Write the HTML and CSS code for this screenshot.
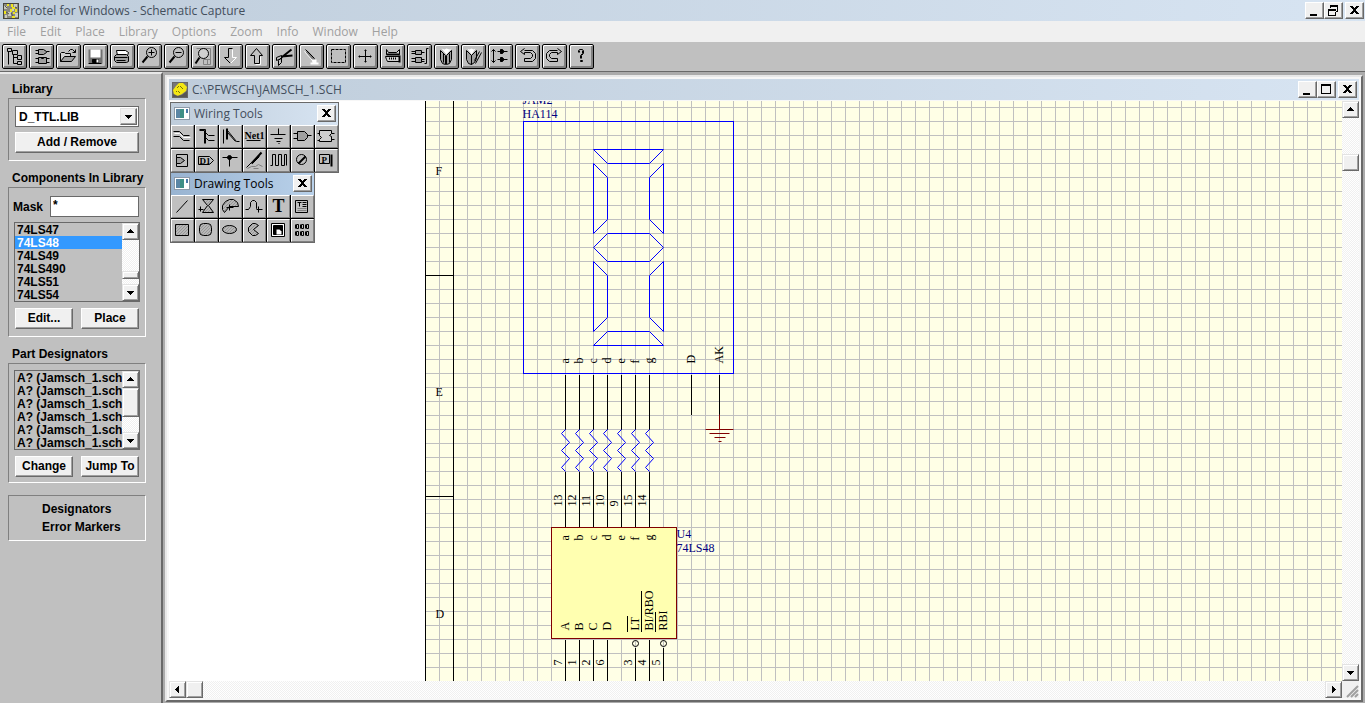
FILE: index.html
```html
<!DOCTYPE html>
<html lang="en">
<head>
  <meta charset="UTF-8" />
  <meta name="viewport" content="width=device-width, initial-scale=1.0"/>
  <title>Protel for Windows - Schematic Capture</title>
  <link rel="stylesheet" href="styles.css">
</head>
<body>
  <!-- shared fills and symbols -->
  <svg class="defs" width="0" height="0" aria-hidden="true">
    <defs>
      <pattern id="hatch" width="3" height="3" patternUnits="userSpaceOnUse">
        <rect width="3" height="3" fill="#d8d8d8"/>
        <path d="M-1 1L1 -1M0 3L3 0M2 4L4 2" stroke="#555" stroke-width="1"/>
      </pattern>
      <symbol id="i-close" viewBox="0 0 14 13">
        <path d="M3 2h3v1h1v1h1v-1h1v-1h3v1h-1v1h-1v1h-1v2h1v1h1v1h1v1h-3v-1h-1v-1h-1v1h-1v1h-3v-1h1v-1h1v-1h1v-2h-1v-1h-1v-1h-1z"/>
      </symbol>
      <symbol id="i-min" viewBox="0 0 14 13"><path d="M3 10h7v2h-7z"/></symbol>
      <symbol id="i-max" viewBox="0 0 14 13"><path fill-rule="evenodd" d="M2 1h10v10h-10zM3 3v7h8v-7z"/></symbol>
      <symbol id="i-restore" viewBox="0 0 14 13">
        <path fill-rule="evenodd" d="M4 1h8v7h-3v-1h2v-4h-6v1h-1zM2 5h8v7h-8zM3 7v4h6v-4z"/>
      </symbol>
      <symbol id="i-app" viewBox="0 0 16 16">
        <rect width="16" height="16" fill="#8b8b82"/>
        <path d="M1 3h3v3h-3zM5 9h3v4h-3zM11 1h3v3h-3zM12 10h3v4h-3zM2 12h2v3h-2zM9 6h2v2h-2z" fill="#c9cbc0"/>
        <path d="M4 1h2v2h-2zM8 1h2v3h2v2h-3v-2h-1zM12 6h2v3h-2zM7 6h2v3h-2zM1 8h2v3h-2zM9 13h3v2h-3zM10 9h2v2h-2z" fill="#efe51f"/>
        <path d="M2 3l2 2M3 9l3 2M8 10l2 3M12 4l2 1" fill="none" stroke="#55554c"/>
        <rect x=".5" y=".5" width="15" height="15" fill="none" stroke="#45453c"/>
      </symbol>
      <symbol id="i-doc" viewBox="0 0 16 16">
        <rect width="16" height="16" fill="#777"/>
        <path d="M1 8l3-4 3-3h4l4 4-1 4-4 3-4 2-4-2z" fill="#f3e713"/>
        <path d="M1 12l4 2 5-1 5-4v6h-14z" fill="#555"/>
        <path d="M8 4l3 3M5 6l2-2M6 9l2 2M4 9l1 1" stroke="#77720a" fill="none"/>
        <rect x=".5" y=".5" width="15" height="15" fill="none" stroke="#666"/>
      </symbol>
      <symbol id="i-form" viewBox="0 0 16 13">
        <rect x=".5" y=".5" width="15" height="12" fill="#fff" stroke="#8d9aa8"/>
        <rect x="2" y="2" width="8" height="9" fill="#3f8f86"/>
        <path d="M2 2h4v9h-4z" fill="#5b86a5"/>
        <rect x="12" y="2" width="2" height="4" fill="#4a79a8"/>
      </symbol>
      <symbol id="i-up" viewBox="0 0 13 13"><path d="M6 4h1v1h1v1h1v1h1v1h-7v-1h1v-1h1v-1h1z"/></symbol>
      <symbol id="i-down" viewBox="0 0 13 13"><path d="M3 5h7v1h-1v1h-1v1h-1v1h-1v-1h-1v-1h-1v-1h-1z"/></symbol>
      <symbol id="i-left" viewBox="0 0 13 13"><path d="M8 3v7h-1v-1h-1v-1h-1v-1h-1v-1h1v-1h1v-1h1v-1z"/></symbol>
      <symbol id="i-right" viewBox="0 0 13 13"><path d="M5 3v7h1v-1h1v-1h1v-1h1v-1h-1v-1h-1v-1h-1v-1z"/></symbol>
      <symbol id="resistor" overflow="visible"><path d="M0 0L-4 4L4 13L-4 21L4 29L-4 38L0 42"/></symbol>
    </defs>
  </svg>

  <header class="titlebar">
    <svg class="app-icon"><use href="#i-app"/></svg>
    <h1>Protel for Windows - Schematic Capture</h1>
    <div class="winbtns">
      <button class="winbtn" aria-label="Minimize"><svg><use href="#i-min"/></svg></button>
      <button class="winbtn" aria-label="Restore"><svg><use href="#i-restore"/></svg></button>
      <button class="winbtn close" aria-label="Close"><svg><use href="#i-close"/></svg></button>
    </div>
  </header>

  <nav class="menubar">
    <button>File</button>
    <button>Edit</button>
    <button>Place</button>
    <button>Library</button>
    <button>Options</button>
    <button>Zoom</button>
    <button>Info</button>
    <button>Window</button>
    <button>Help</button>
  </nav>

  <div class="toolbar">
    <button aria-label="Project tree"><svg class="ico" viewBox="-.5 -.5 21 21"><path d="M3 2h4v3h-4zM4 5v13M8 4h5v4h-5zM9 8v9h4M9 11h4M13 9h4v4h-4zM13 15h4v3h-4z"/></svg></button>
    <button aria-label="Parts"><svg class="ico" viewBox="-.5 -.5 21 21"><path class="g" d="M7 3h5l3 2v1l-3 2h-5zM7 11h8v6h-8z"/><path d="M4 4h3M4 7h3M15 5h3M4 12h3M4 16h3M15 12h3M15 16h3M10 11v1h2v-1"/></svg></button>
    <button aria-label="Open"><svg class="ico" viewBox="-.5 -.5 21 21"><path class="gf" d="M2 15V7l1-1h3l1 1h5v3"/><path class="g" d="M2 15l4-5h11l-4 5z"/><path d="M10 5l2-2h2l3 3M17 3v3h-3"/></svg></button>
    <button aria-label="Save"><svg class="ico" viewBox="-.5 -.5 21 21"><path class="d" d="M3 3h14v14h-13l-1-1z"/><path class="wf" d="M5 3h10v8h-10z"/><path class="k" d="M7 13h6v3h-6z"/><path class="wf" d="M11 13h2v3h-2z"/><path d="M3 17h13"/></svg></button>
    <button aria-label="Print"><svg class="ico" viewBox="-.5 -.5 21 21"><path class="w" d="M4 4h9l3 2-1 3h-10z"/><path class="g" d="M2 10l2-2h10l2 2v5l-2 1h-10l-2-2z"/><path d="M2 11h13M4 14h9"/></svg></button>
    <button aria-label="Zoom in"><svg class="ico" viewBox="-.5 -.5 21 21"><circle cx="12" cy="6" r="5"/><path d="M12 3v6M9 6h6"/><path class="t" d="M8 10L3 16"/></svg></button>
    <button aria-label="Zoom out"><svg class="ico" viewBox="-.5 -.5 21 21"><circle cx="12" cy="6" r="5"/><path d="M9 6h6"/><path class="t" d="M8 10L3 16"/></svg></button>
    <button aria-label="Zoom area"><svg class="ico" viewBox="-.5 -.5 21 21"><path class="gl" d="M3 2h14v16h-7v-5h7M14 13v5"/><circle class="gf" cx="10" cy="7" r="5"/><path class="t" d="M6 11L2 17"/></svg></button>
    <button aria-label="Down the hierarchy"><svg class="ico" viewBox="-.5 -.5 21 21"><path d="M12 2h-4v9h-4l6 6"/><path class="wl" d="M12 3v8h4l-6 6"/></svg></button>
    <button aria-label="Up the hierarchy"><svg class="ico" viewBox="-.5 -.5 21 21"><path class="wl" d="M13 10v8h-5"/><path d="M7 17h5V9h3l-6-7-6 7h4z"/></svg></button>
    <button aria-label="Cut"><svg class="ico" viewBox="-.5 -.5 21 21"><path class="t" d="M7 11L17 3M7 10L18 9"/><path d="M2 11l5-2v3l-5 2zM7 11v5l-3 3v-5z"/></svg></button>
    <button aria-label="Paste"><svg class="ico" viewBox="-.5 -.5 21 21"><path class="gt" d="M5 5l8 9"/><path class="wl" d="M3 5l8 9"/><path class="wf" d="M10 13h5v3h2v2h-8v-2h2z"/><path d="M4 3l9 9"/></svg></button>
    <button aria-label="Select inside"><svg class="ico" viewBox="-.5 -.5 21 21"><path stroke-dasharray="3 1" d="M3 3h14v13h-14z"/></svg></button>
    <button aria-label="Move"><svg class="ico" viewBox="-.5 -.5 21 21"><path d="M10 3v13M3 10h13M9 4h2M9 15h2M4 9v2M15 9v2"/></svg></button>
    <button aria-label="Drag"><svg class="ico" viewBox="-.5 -.5 21 21"><path class="gf" d="M4 3l2 3h8l3-3v5h-13z"/><path class="t" d="M4 8h13"/><path class="gf" d="M3 10h14v5h-12l-1-2z"/><path class="t" d="M17 9v7"/><path d="M7 11v2M9 11v2M11 11v2M13 11v2"/></svg></button>
    <button aria-label="Align"><svg class="ico" viewBox="-.5 -.5 21 21"><path class="g" d="M6 4h6v4h-6zM6 11h6v5h-6z"/><path d="M2 5h4M2 7h4M12 6h3M2 12h4M2 15h4M12 13h3M12 15h3M19 2h-2v15h-2"/></svg></button>
    <button aria-label="Library browser"><svg class="ico" viewBox="-.5 -.5 21 21"><path class="g" d="M4 4l5 5v9l-3-1-2-4zM15 4l-5 5v9l3-1 2-4z"/><path class="wf" d="M5 2l5 6 5-6-2 1-3-1-2 1z"/><path d="M7 7v9M13 7v9"/></svg></button>
    <button aria-label="Library editor"><svg class="ico" viewBox="-.5 -.5 21 21"><path class="g" d="M3 4l5 5v9l-3-1-2-4zM13 4l-5 5v9l3-2 2-4z"/><path class="wf" d="M4 2l4 6 4-6-2 1-2-1-2 1z"/><path d="M18 6L12 17M16 5L11 14"/></svg></button>
    <button aria-label="Annotate"><svg class="ico" viewBox="-.5 -.5 21 21"><path d="M3 3v13M1 5l2-2 2 2M1 14l2 2 2-2M7 5h10M7 13h10"/><path class="k" d="M10 3h2l1 1v2l-1 1h-2zM10 11h2l1 1v2l-1 1h-2z"/></svg></button>
    <button aria-label="Undo"><svg class="ico" viewBox="-.5 -.5 21 21"><path d="M7 2L3 5l4 3v-2h6l2 2v2l-2 2h-6M7 4h8l3 3v5l-3 3h-8v-3"/></svg></button>
    <button aria-label="Redo"><svg class="ico" viewBox="-.5 -.5 21 21"><path d="M13 2l4 3-4 3v-2h-6l-2 2v2l2 2h6M13 4h-8l-3 3v5l3 3h8v-3"/></svg></button>
    <button aria-label="Help"><svg class="ico" viewBox="-.5 -.5 21 21"><path d="M7 6V4l1-1h3l1 1v3l-2 2v3M8 6V4M11 4v3l-2 2v3M9 14h2v1h-2z"/></svg></button>
  </div>

  <div class="workspace">
    <aside class="sidebar">
      <section>
        <label class="heading" for="library">Library</label>
        <div class="group">
          <div class="combo">
            <select id="library"><option>D_TTL.LIB</option></select>
            <span class="drop"><svg><use href="#i-down"/></svg></span>
          </div>
          <button class="btn">Add / Remove</button>
        </div>
      </section>

      <section>
        <h2 class="heading">Components In Library</h2>
        <div class="group">
          <div class="mask">
            <label for="mask">Mask</label>
            <input type="text" id="mask" value="*">
          </div>
          <div class="listbox">
            <ul>
              <li>74LS47</li>
              <li class="selected">74LS48</li>
              <li>74LS49</li>
              <li>74LS490</li>
              <li>74LS51</li>
              <li>74LS54</li>
            </ul>
            <div class="scroll">
              <button class="sb" aria-label="Up"><svg><use href="#i-up"/></svg></button>
              <span class="before"></span>
              <span class="thumb small"></span>
              <span class="rest"></span>
              <button class="sb" aria-label="Down"><svg><use href="#i-down"/></svg></button>
            </div>
          </div>
          <div class="pair">
            <button class="btn">Edit...</button>
            <button class="btn">Place</button>
          </div>
        </div>
      </section>

      <section>
        <h2 class="heading">Part Designators</h2>
        <div class="group parts">
          <div class="listbox">
            <ul>
              <li>A? (Jamsch_1.sch)</li>
              <li>A? (Jamsch_1.sch)</li>
              <li>A? (Jamsch_1.sch)</li>
              <li>A? (Jamsch_1.sch)</li>
              <li>A? (Jamsch_1.sch)</li>
              <li>A? (Jamsch_1.sch)</li>
            </ul>
            <div class="scroll">
              <button class="sb" aria-label="Up"><svg><use href="#i-up"/></svg></button>
              <span class="thumb large"></span>
              <span class="rest"></span>
              <button class="sb" aria-label="Down"><svg><use href="#i-down"/></svg></button>
            </div>
          </div>
          <div class="pair">
            <button class="btn">Change</button>
            <button class="btn">Jump To</button>
          </div>
        </div>
      </section>

      <div class="group modes">
        <p>Designators</p>
        <p>Error Markers</p>
      </div>
    </aside>

    <main class="mdi">
      <div class="child">
        <div class="titlebar">
          <svg class="app-icon"><use href="#i-doc"/></svg>
          <h2>C:\PFWSCH\JAMSCH_1.SCH</h2>
          <div class="winbtns">
            <button class="winbtn" aria-label="Minimize"><svg><use href="#i-min"/></svg></button>
            <button class="winbtn" aria-label="Maximize"><svg><use href="#i-max"/></svg></button>
            <button class="winbtn close" aria-label="Close"><svg><use href="#i-close"/></svg></button>
          </div>
        </div>

        <div class="view">
          <div class="canvas">
            <svg class="sheet">
              <defs>
                <pattern id="grid" width="14" height="14" y="6" patternUnits="userSpaceOnUse">
                  <rect width="14" height="14" fill="#ffffe6"/>
                  <path d="M0 0h14v1h-13v13h-1z" fill="#c0c0c0"/>
                </pattern>
              </defs>
              <rect width="100%" height="100%" fill="url(#grid)"/>
              <g transform="translate(.5 .5)">
                <!-- sheet border and zones -->
                <path class="line" d="M0 -1V2000M28 -1V2000M0 174H28M0 395H28"/>
                <text class="zone" x="10" y="73">F</text>
                <text class="zone" x="10" y="294">E</text>
                <text class="zone" x="10" y="516">D</text>

                <!-- JAM2: seven segment display -->
                <text class="name" x="97" y="2">JAM2</text>
                <text class="name" x="97" y="16">HA114</text>
                <g class="blue">
                  <rect x="98" y="20" width="210" height="252"/>
                  <path d="M168 48H238L224 62H182Z"/>
                  <path d="M168 62L182 76V118L168 132Z"/>
                  <path d="M238 62L224 76V118L238 132Z"/>
                  <path d="M168 146L182 132H224L238 146L224 160H182Z"/>
                  <path d="M168 160L182 174V216L168 230Z"/>
                  <path d="M238 160L224 174V216L238 230Z"/>
                  <path d="M182 230H224L238 244H168Z"/>
                </g>
                <g class="pin">
                  <text transform="translate(143 262) rotate(-90)">a</text>
                  <text transform="translate(157 262) rotate(-90)">b</text>
                  <text transform="translate(171 262) rotate(-90)">c</text>
                  <text transform="translate(185 262) rotate(-90)">d</text>
                  <text transform="translate(199 262) rotate(-90)">e</text>
                  <text transform="translate(213 262) rotate(-90)">f</text>
                  <text transform="translate(227 262) rotate(-90)">g</text>
                  <text transform="translate(269 262) rotate(-90)">D</text>
                  <text transform="translate(297 262) rotate(-90)">AK</text>
                </g>
                <path class="line" d="M140 273V328M154 273V328M168 273V328M182 273V328M196 273V328M210 273V328M224 273V328M266 273V313M294 273V313"/>
                <path class="maroon" d="M294 313V328M280 328H308M284 332H304M289 336H300M293 340H296"/>

                <!-- series resistors -->
                <g class="blue">
                  <use href="#resistor" x="140" y="328"/>
                  <use href="#resistor" x="154" y="328"/>
                  <use href="#resistor" x="168" y="328"/>
                  <use href="#resistor" x="182" y="328"/>
                  <use href="#resistor" x="196" y="328"/>
                  <use href="#resistor" x="210" y="328"/>
                  <use href="#resistor" x="224" y="328"/>
                </g>
                <path class="line" d="M140 370V426M154 370V426M168 370V426M182 370V426M196 370V426M210 370V426M224 370V426"/>
                <g class="pin">
                  <text transform="translate(136 405) rotate(-90)">13</text>
                  <text transform="translate(150 405) rotate(-90)">12</text>
                  <text transform="translate(164 405) rotate(-90)">11</text>
                  <text transform="translate(178 405) rotate(-90)">10</text>
                  <text transform="translate(192 405) rotate(-90)">9</text>
                  <text transform="translate(206 405) rotate(-90)">15</text>
                  <text transform="translate(220 405) rotate(-90)">14</text>
                </g>

                <!-- U4: 74LS48 decoder -->
                <rect class="chip" x="126" y="426" width="125" height="111"/>
                <text class="name" x="251" y="436">U4</text>
                <text class="name" x="251" y="450">74LS48</text>
                <g class="pin">
                  <text transform="translate(143 439) rotate(-90)">a</text>
                  <text transform="translate(157 439) rotate(-90)">b</text>
                  <text transform="translate(171 439) rotate(-90)">c</text>
                  <text transform="translate(185 439) rotate(-90)">d</text>
                  <text transform="translate(199 439) rotate(-90)">e</text>
                  <text transform="translate(213 439) rotate(-90)">f</text>
                  <text transform="translate(227 439) rotate(-90)">g</text>
                  <text transform="translate(143 529) rotate(-90)">A</text>
                  <text transform="translate(157 529) rotate(-90)">B</text>
                  <text transform="translate(171 529) rotate(-90)">C</text>
                  <text transform="translate(185 529) rotate(-90)">D</text>
                  <text transform="translate(213 529) rotate(-90)">LT</text>
                  <text transform="translate(227 529) rotate(-90)">BI/RBO</text>
                  <text transform="translate(241 529) rotate(-90)">RBI</text>
                  <text transform="translate(136 564) rotate(-90)">7</text>
                  <text transform="translate(150 564) rotate(-90)">1</text>
                  <text transform="translate(164 564) rotate(-90)">2</text>
                  <text transform="translate(178 564) rotate(-90)">6</text>
                  <text transform="translate(206 564) rotate(-90)">3</text>
                  <text transform="translate(220 564) rotate(-90)">4</text>
                  <text transform="translate(234 564) rotate(-90)">5</text>
                </g>
                <path class="line" d="M202 530V514M216 530V489M230 530V510"/>
                <path class="line" d="M140 538V2000M154 538V2000M168 538V2000M182 538V2000M210 546V2000M224 538V2000M238 546V2000"/>
                <circle class="bubble" cx="210" cy="542" r="3"/>
                <circle class="bubble" cx="238" cy="542" r="3"/>
              </g>
            </svg>

            <div class="palettes">
              <div class="palette">
                <div class="palette-title">
                  <svg class="form-icon"><use href="#i-form"/></svg>
                  <h3>Wiring Tools</h3>
                  <button class="winbtn" aria-label="Close"><svg><use href="#i-close"/></svg></button>
                </div>
                <div class="tools seven">
                  <button aria-label="Wire"><svg class="ico" viewBox="-.5 -.5 21 21"><path class="wl" d="M2 7h5l4 4h7"/><path d="M1 5h6l4 4h6M1 10h6l4 4h6"/></svg></button>
                  <button aria-label="Bus"><svg class="ico" viewBox="-.5 -.5 21 21"><path d="M3 3h6v14M3 4h5v13M9 6l3 3h6M9 11l3 3h6"/></svg></button>
                  <button aria-label="Bus entry"><svg class="ico" viewBox="-.5 -.5 21 21"><path d="M3 3v14M6 2v11M7 2v11M7 4l9 11h3M7 6l8 9"/></svg></button>
                  <button aria-label="Net label"><svg class="ico" viewBox="-.5 -.5 21 21"><text x="0" y="12">Net1</text><path d="M2 14h14"/></svg></button>
                  <button aria-label="Power port"><svg class="ico" viewBox="-.5 -.5 21 21"><path d="M10 2v6M2 8h15M6 12h8M8 15h4M10 17h1"/></svg></button>
                  <button aria-label="Part"><svg class="ico" viewBox="-.5 -.5 21 21"><path class="g" d="M5 5h7l3 3v3l-3 3h-7z"/><path d="M1 7h4M1 12h4M15 9h4"/></svg></button>
                  <button aria-label="Sheet symbol"><svg class="ico" viewBox="-.5 -.5 21 21"><path class="gf" d="M3 4h12v3l-2 2 2 1v5h-12v-2l2-2-2-2z"/><path d="M1 7h2M1 14h2M15 7h3M15 13h3"/></svg></button>
                  <button aria-label="Sheet entry"><svg class="ico" viewBox="-.5 -.5 21 21"><path d="M4 4h11v12h-11z"/><path class="g" d="M4 7h4l4 3-4 3h-4z"/></svg></button>
                  <button aria-label="Port"><svg class="ico" viewBox="-.5 -.5 21 21"><path d="M2 6h11l4 4-4 4h-11z"/><text class="tiny" x="3" y="13">D1</text></svg></button>
                  <button aria-label="Junction"><svg class="ico" viewBox="-.5 -.5 21 21"><path d="M2 7h15M9 7v9"/><circle class="k" cx="9" cy="7" r="2"/></svg></button>
                  <button aria-label="Directive"><svg class="ico" viewBox="-.5 -.5 21 21"><path class="t" d="M17 2L7 13"/><path d="M7 12l-5 5M8 13l7-7"/><path class="gl" d="M3 18l4-2h4l3-2 4 2M9 18h5"/></svg></button>
                  <button aria-label="Stimulus"><svg class="ico" viewBox="-.5 -.5 21 21"><path d="M2 15h2V4h3v11h3V4h3v11h3V4h2v11"/></svg></button>
                  <button aria-label="No ERC"><svg class="ico" viewBox="-.5 -.5 21 21"><circle cx="9" cy="9" r="5"/><path class="t" d="M6 13l7-7"/></svg></button>
                  <button aria-label="PCB directive"><svg class="ico" viewBox="-.5 -.5 21 21"><path d="M3 4h10v9h-10z"/><path class="t" d="M15 4v12"/><text class="tiny" x="5" y="12">P</text></svg></button>
                </div>
              </div>

              <div class="palette active">
                <div class="palette-title">
                  <svg class="form-icon"><use href="#i-form"/></svg>
                  <h3>Drawing Tools</h3>
                  <button class="winbtn" aria-label="Close"><svg><use href="#i-close"/></svg></button>
                </div>
                <div class="tools six">
                  <button aria-label="Line"><svg class="ico" viewBox="-.5 -.5 21 21"><path d="M4 16L15 4"/></svg></button>
                  <button aria-label="Polygon"><svg class="ico" viewBox="-.5 -.5 21 21"><path class="h" d="M6 3h11l-5 6 5 7h-11l5-7z"/><path d="M4 10v5M2 13h5"/></svg></button>
                  <button aria-label="Arc"><svg class="ico" viewBox="-.5 -.5 21 21"><path class="h" d="M4 16L2 13V9L5 5L9 3H13L17 6L18 10H9Z"/><path d="M9 8v6M6 11h7"/></svg></button>
                  <button aria-label="Bezier"><svg class="ico" viewBox="-.5 -.5 21 21"><path d="M1 13h3l2-3V6l2-2h2l2 2v6l2 2M14 10v6M12 13h6"/></svg></button>
                  <button aria-label="Text"><svg class="ico" viewBox="-.5 -.5 21 21"><text class="big" x="4" y="15">T</text></svg></button>
                  <button aria-label="Text frame"><svg class="ico" viewBox="-.5 -.5 21 21"><path d="M3 4h12v12h-12zM5 6h4M7 6v4M10 6h4M10 8h4M10 10h4"/><path class="gl" d="M5 12h9M5 14h9"/></svg></button>
                  <button aria-label="Rectangle"><svg class="ico" viewBox="-.5 -.5 21 21"><path class="h" d="M3 4h13v11h-13z"/></svg></button>
                  <button aria-label="Rounded rectangle"><svg class="ico" viewBox="-.5 -.5 21 21"><rect class="h" x="3" y="3" width="12" height="12" rx="4"/></svg></button>
                  <button aria-label="Ellipse"><svg class="ico" viewBox="-.5 -.5 21 21"><ellipse class="h" cx="9" cy="9" rx="7" ry="4"/></svg></button>
                  <button aria-label="Pie"><svg class="ico" viewBox="-.5 -.5 21 21"><path class="h" d="M14 5l-3-2h-3l-4 4v4l4 4h3l3-2-5-4z"/></svg></button>
                  <button aria-label="Graphic"><svg class="ico" viewBox="-.5 -.5 21 21"><path class="w" d="M3 3h13v13h-13z"/><path class="k" d="M5 5h9v9h-9z"/><path class="wf" d="M8 9h3l2 2v3h-5z"/></svg></button>
                  <button aria-label="Array"><svg class="ico" viewBox="-.5 -.5 21 21"><path d="M4 4h2v4h-2zM9 4h2v4h-2zM14 4h2v4h-2zM4 11h2v4h-2zM9 11h2v4h-2zM14 11h2v4h-2z"/><path d="M3 4v4M8 4v4M13 4v4M3 11v4M8 11v4M13 11v4"/></svg></button>
                </div>
              </div>
            </div>
          </div>

          <div class="vscroll">
            <button class="sb" aria-label="Up"><svg><use href="#i-up"/></svg></button>
            <span class="thumb"></span>
            <button class="sb end" aria-label="Down"><svg><use href="#i-down"/></svg></button>
          </div>
          <div class="hscroll">
            <button class="sb" aria-label="Left"><svg><use href="#i-left"/></svg></button>
            <span class="thumb"></span>
            <button class="sb end" aria-label="Right"><svg><use href="#i-right"/></svg></button>
          </div>
          <svg class="grip" viewBox="0 0 17 17">
            <path d="M5 16L16 5M9 16l7-7M13 16l3-3" stroke="#a0a0a0" stroke-width="2"/>
          </svg>
        </div>
      </div>
    </main>
  </div>
</body>
</html>
```

FILE: styles.css
```css
* {
  box-sizing: border-box;
}

body {
  display: flex;
  flex-direction: column;
  height: 100vh;
  margin: 0;
  overflow: hidden;
  background: #c0c0c0;
  color: #000;
  font-family: 'Open Sans', 'Noto Sans', sans-serif;
  font-size: 12px;
}

h1, h2, h3, p, ul {
  margin: 0;
  padding: 0;
}

button {
  margin: 0;
  padding: 0;
  font: inherit;
  color: inherit;
}

svg {
  display: block;
  flex: none;
}

.defs {
  position: absolute;
}

/* title bars */
.titlebar {
  display: flex;
  align-items: center;
  flex: none;
  height: 21px;
  padding: 0 1px 0 3px;
  background: linear-gradient(to right, #bfcddb, #d7e4f2);
  color: #434e5c;
}

.child .titlebar {
  padding-right: 2px;
}

.titlebar h1,
.titlebar h2 {
  flex: 1;
  margin-left: 4px;
  font-size: 12px;
  line-height: 20px;
  font-weight: normal;
}

.app-icon {
  width: 16px;
  height: 16px;
}

.winbtns {
  display: flex;
}

.winbtn {
  width: 19px;
  height: 17px;
  border: 1px solid;
  border-color: #fff #696969 #696969 #fff;
  background: #f0f0f0;
  box-shadow: inset -1px -1px #a0a0a0;
}

.winbtn svg {
  width: 14px;
  height: 13px;
  margin: 1px;
}

.winbtn.close {
  margin-left: 2px;
}

.menubar {
  display: flex;
  flex: none;
  gap: 14px;
  height: 21px;
  padding: 0 0 1px 7px;
  background: #f0f0f0;
}

.menubar button {
  border: none;
  background: none;
  color: #a0a0a0;
}

/* main toolbar */
.toolbar {
  display: flex;
  flex: none;
  gap: 2px;
  padding: 2px;
  border-bottom: 1px solid #696969;
}

.toolbar button {
  width: 25px;
  height: 25px;
  border: 1px solid #000;
  border-radius: 2px;
  background: #c0c0c0;
  box-shadow: inset 1px 1px #fff, inset -2px -2px #808080;
}

.ico {
  width: 21px;
  height: 21px;
  margin: 1px;
  fill: none;
  stroke: #000;
  stroke-width: 1;
}

.ico .g { fill: #a0a0a0; }
.ico .gf { fill: #d0d0d0; }
.ico .w { fill: #fff; }
.ico .d { fill: #707070; stroke: none; }
.ico .k { fill: #000; }
.ico .h { fill: url(#hatch); }
.ico .wf { fill: #fff; stroke: none; }
.ico .wl { stroke: #fff; }
.ico .gl { stroke: #808080; }
.ico .t { stroke-width: 2; }
.ico .gt { stroke: #808080; stroke-width: 3; }

.ico text {
  fill: #000;
  stroke: none;
  font: bold 10px 'Liberation Serif', serif;
}

.ico .tiny {
  font-size: 9px;
}

.ico .big {
  font-size: 18px;
}

.workspace {
  display: flex;
  flex: 1;
  min-height: 0;
}

/* library panel */
.sidebar {
  flex: none;
  width: 163px;
  padding: 8px 15px 0 8px;
  border-top: 2px solid #e8e8e8;
  border-right: 2px solid #696969;
  font-family: 'Liberation Sans', Arial, sans-serif;
  font-size: 12px;
  font-weight: bold;
}

.heading {
  display: block;
  height: 16px;
  padding-left: 4px;
  font-size: 12px;
  line-height: 15px;
  white-space: nowrap;
}

.group {
  display: flex;
  flex-direction: column;
  gap: 5px;
  margin-bottom: 10px;
  padding: 7px 6px;
  border: 1px solid;
  border-color: #808080 #fff #fff #808080;
}

.combo {
  display: flex;
  height: 21px;
  border: 1px solid #696969;
  background: #fff;
}

.combo select {
  flex: 1;
  min-width: 0;
  padding: 0 3px;
  border: none;
  background: none;
  appearance: none;
  font: inherit;
}

.drop {
  width: 17px;
  margin: 1px;
  border: 1px solid;
  border-color: #e3e3e3 #696969 #696969 #e3e3e3;
  background: #f0f0f0;
  box-shadow: inset -1px -1px #a0a0a0;
}

.drop svg,
.sb svg {
  width: 13px;
  height: 13px;
  margin: 1px;
}

.btn {
  flex: 1;
  height: 21px;
  min-height: 21px;
  padding-bottom: 1px;
  border: 1px solid;
  border-color: #fff #696969 #696969 #fff;
  background: #f0f0f0;
  box-shadow: inset -1px -1px #a0a0a0;
  line-height: 16px;
  white-space: nowrap;
}

.mask {
  display: flex;
  align-items: center;
  justify-content: space-between;
  margin: 1px 0 0 -2px;
}

.mask input {
  width: 89px;
  height: 21px;
  padding: 0 2px 4px;
  border: 1px solid #696969;
  background: #fff;
  font: inherit;
}

.listbox {
  display: flex;
  margin: 0 -1px 1px;
  border: 1px solid #696969;
}

.listbox ul {
  flex: 1;
  overflow: hidden;
  list-style: none;
}

.listbox li {
  padding: 1px 0 0 2px;
  line-height: 12px;
  white-space: nowrap;
}

.listbox .selected {
  background: #3399ff;
  color: #fff;
}

.pair {
  display: flex;
  gap: 8px;
}

.pair .btn {
  width: 50%;
}

.parts {
  padding: 6px 6px 5px;
}

.modes {
  gap: 4px;
  margin-top: 12px;
  padding: 6px 0 6px 33px;
}

.modes p {
  line-height: 14px;
}

/* scrollbars */
.scroll,
.vscroll,
.hscroll {
  display: flex;
  background: repeating-conic-gradient(#fff 0 25%, #f0f0f0 0 50%) 0 0 / 2px 2px;
}

.scroll,
.vscroll {
  flex: none;
  flex-direction: column;
  width: 17px;
}

.sb,
.thumb {
  flex: none;
  width: 17px;
  height: 17px;
  border: 1px solid;
  border-color: #e3e3e3 #696969 #696969 #e3e3e3;
  background: #f0f0f0;
  box-shadow: inset 1px 1px #fff, inset -1px -1px #a0a0a0;
}

.sb.end {
  margin: auto 0 0 auto;
}

.thumb.small { height: 8px; }
.thumb.large { height: 29px; }
.before { height: 31px; }
.rest { flex: 1; }

/* document window */
.mdi {
  flex: 1;
  display: flex;
  min-width: 0;
  padding: 3px 2px 1px;
  background: #ababab;
}

.child {
  flex: 1;
  display: flex;
  flex-direction: column;
  min-width: 0;
  padding: 2px;
  border: 2px solid;
  border-color: #e8e8e8 #696969 #696969 #e8e8e8;
  background: #f7f7f7;
}

.view {
  flex: 1;
  display: grid;
  grid-template-columns: 1fr 17px;
  grid-template-rows: 1fr 17px;
  min-height: 0;
  padding-top: 1px;
}

.canvas {
  position: relative;
  display: flex;
  min-width: 0;
  min-height: 0;
  padding-left: 256px;
  background: #fff;
  overflow: hidden;
}

.sheet {
  flex: 1;
  min-width: 0;
  height: 100%;
  fill: none;
  stroke-width: 1;
}

.sheet text {
  fill: #000;
  font-family: 'Liberation Serif', serif;
  font-size: 12px;
}

.sheet .name { fill: #000080; }
.sheet .line { stroke: #000; shape-rendering: crispEdges; }
.sheet .blue { stroke: #0000ff; }
.sheet .maroon { stroke: #800000; }
.sheet .chip { fill: #ffffb0; stroke: #800000; }
.sheet .bubble { stroke: #000; }

.vscroll .thumb {
  margin-top: 36px;
}

.grip {
  width: 17px;
  height: 17px;
  background: #f0f0f0;
}

/* floating palettes */
.palettes {
  position: absolute;
  top: 1px;
  left: 1px;
  display: flex;
  flex-direction: column;
  align-items: flex-start;
}

.palette {
  border: 1px solid #696969;
}

.palette + .palette {
  margin-top: -1px;
}

.palette-title {
  display: flex;
  align-items: center;
  height: 22px;
  padding: 0 2px 1px 3px;
  background: linear-gradient(to right, #bfcddb, #d7e4f2);
  color: #434e5c;
}

.palette.active .palette-title {
  background: linear-gradient(to right, #99b4d1, #b9d1ea);
  color: #000;
}

.palette-title h3 {
  flex: 1;
  margin-left: 4px;
  font-size: 12px;
  font-weight: normal;
}

.form-icon {
  width: 16px;
  height: 13px;
}

.tools {
  display: grid;
  gap: 1px;
  background: #000;
}

.seven { grid-template-columns: repeat(7, 23px); }
.six { grid-template-columns: repeat(6, 23px); }

.tools button {
  width: 23px;
  height: 23px;
  border: 1px solid;
  border-color: #fff #808080 #808080 #fff;
  background: #c0c0c0;
}

.tools .ico {
  margin: 0;
}
```
